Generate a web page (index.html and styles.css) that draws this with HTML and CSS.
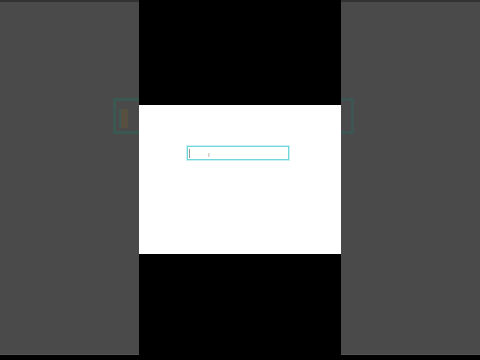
FILE: index.html
```html
<!DOCTYPE html>
<html>
<head>
<meta charset="utf-8">
<link rel="stylesheet" href="styles.css">
</head>
<body>
<div class="stage">
  <div class="side side-left">
    <div class="ghost ghost-left"><div class="ghost-bar"></div></div>
  </div>
  <div class="center">
    <div class="band"></div>
    <div class="sheet">
      <div class="field"><span class="caret"></span><span class="ibeam">I</span></div>
    </div>
    <div class="band rest"></div>
  </div>
  <div class="side side-right">
    <div class="ghost ghost-right"></div>
  </div>
</div>
</body>
</html>
```
FILE: styles.css
```css
html, body {
  margin: 0;
  padding: 0;
  background: #000;
  width: 480px;
  height: 360px;
  overflow: hidden;
  font-family: "Liberation Sans", Arial, sans-serif;
}
.stage {
  display: flex;
  width: 480px;
  height: 360px;
}
.side {
  width: 139px;
  height: 355px;
  background: #4a4a4a;
  border-top: 2px solid #333;
  border-bottom: 1px solid #555;
  display: flex;
  flex-direction: column;
  padding-top: 96px;
  box-sizing: border-box;
}
.ghost {
  box-sizing: border-box;
  height: 36px;
  border: 3px solid #3b5853;
  display: flex;
  padding: 8px 0 3px 3px;
}
.ghost-left {
  width: 26px;
  margin-left: auto;
  border-right: none;
}
.ghost-right {
  width: 13px;
  border-left: none;
  border-color: #3e5653;
}
.ghost-bar {
  width: 7px;
  background: #574f40;
  border-left: 2px solid #3b5853;
}
.center {
  width: 202px;
  display: flex;
  flex-direction: column;
}
.band {
  height: 105px;
  background: #000;
}
.band.rest {
  flex: 1;
}
.sheet {
  height: 149px;
  background: #fff;
  padding: 41px 0 0 48px;
  box-sizing: border-box;
}
.field {
  box-sizing: border-box;
  width: 102px;
  height: 14px;
  border: 1px solid #6fd6dc;
  outline: 1px solid #c9f0f2;
  display: flex;
  align-items: center;
  padding-left: 1px;
}
.caret {
  width: 1px;
  height: 9px;
  background: #999;
}
.ibeam {
  margin-left: 18px;
  margin-top: 3px;
  font-size: 6px;
  line-height: 6px;
  color: #888;
}
```
